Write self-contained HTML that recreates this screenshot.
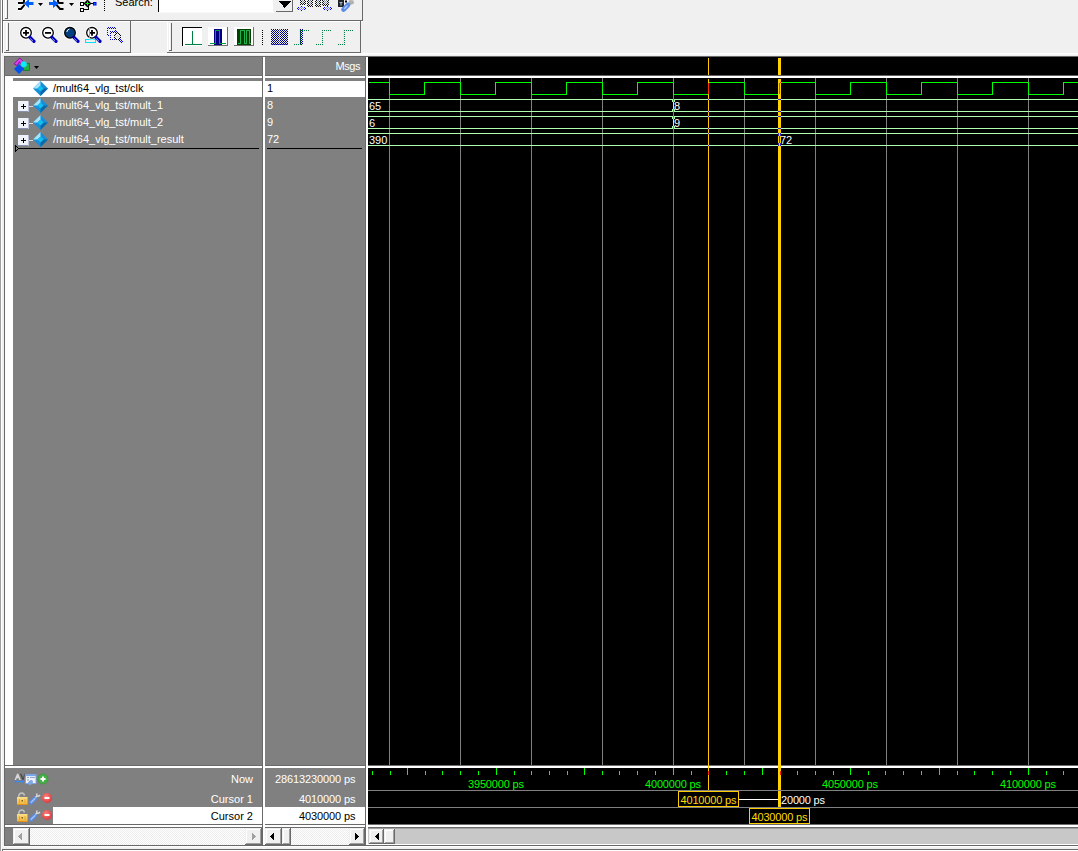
<!DOCTYPE html>
<html><head><meta charset="utf-8"><style>
html,body{margin:0;padding:0;width:1078px;height:851px;overflow:hidden;background:#f0f0f0;}
svg{display:block;font-family:"Liberation Sans",sans-serif;font-size:11px;}
</style></head><body>
<svg width="1078" height="851" viewBox="0 0 1078 851" shape-rendering="crispEdges">
<rect x="0" y="0" width="1" height="851" fill="#a0a0a0" />
<rect x="1" y="0" width="1" height="851" fill="#ffffff" />
<rect x="2" y="0" width="1" height="53" fill="#696969" />
<rect x="3" y="0" width="1" height="53" fill="#ffffff" />
<rect x="2" y="20" width="361" height="1" fill="#696969" />
<rect x="3" y="21" width="360" height="1" fill="#ffffff" />
<rect x="362" y="0" width="1" height="21" fill="#696969" />
<rect x="5" y="0" width="1" height="19" fill="#ffffff" />
<rect x="7" y="0" width="1" height="19" fill="#696969" />
<rect x="5" y="18" width="3" height="1" fill="#696969" />
<rect x="130" y="21" width="1" height="32" fill="#696969" />
<rect x="4" y="52" width="127" height="1" fill="#696969" />
<rect x="6" y="23" width="1" height="28" fill="#ffffff" />
<rect x="8" y="23" width="1" height="28" fill="#696969" />
<rect x="6" y="50" width="3" height="1" fill="#696969" />
<rect x="167" y="22" width="1" height="30" fill="#ffffff" />
<rect x="167" y="52" width="194" height="1" fill="#696969" />
<rect x="360" y="21" width="1" height="32" fill="#696969" />
<rect x="169" y="23" width="1" height="28" fill="#ffffff" />
<rect x="171" y="23" width="1" height="28" fill="#696969" />
<rect x="169" y="50" width="3" height="1" fill="#696969" />
<rect x="104" y="0" width="1" height="1" fill="#000" />
<rect x="104" y="2" width="1" height="1" fill="#000" />
<rect x="104" y="4" width="1" height="1" fill="#000" />
<rect x="104" y="6" width="1" height="1" fill="#000" />
<rect x="104" y="8" width="1" height="1" fill="#000" />
<rect x="104" y="10" width="1" height="1" fill="#000" />
<text x="115" y="6" fill="#000" text-anchor="start" >Search:</text>
<rect x="158" y="0" width="115" height="12" fill="#ffffff" />
<rect x="158" y="0" width="1" height="12" fill="#000" />
<rect x="158" y="12" width="116" height="1" fill="#f8f8f8" />
<rect x="276" y="0" width="17" height="12" fill="#f0f0f0" />
<rect x="292" y="0" width="1" height="12" fill="#696969" />
<rect x="276" y="11" width="17" height="1" fill="#696969" />
<path d="M278.5 1 L291 1 L284.75 8 Z" fill="#000"/>
<rect x="262" y="30" width="1" height="1" fill="#000" />
<rect x="262" y="32" width="1" height="1" fill="#000" />
<rect x="262" y="34" width="1" height="1" fill="#000" />
<rect x="262" y="36" width="1" height="1" fill="#000" />
<rect x="262" y="38" width="1" height="1" fill="#000" />
<rect x="262" y="40" width="1" height="1" fill="#000" />
<rect x="262" y="42" width="1" height="1" fill="#000" />
<rect x="262" y="44" width="1" height="1" fill="#000" />
<rect x="3" y="53" width="1075" height="1" fill="#ffffff" />
<rect x="3" y="54" width="1075" height="1" fill="#f8f8f8" />
<rect x="4" y="56" width="1074" height="1" fill="#696969" />
<rect x="4" y="56" width="1" height="790" fill="#696969" />
<rect x="2" y="849" width="1076" height="1" fill="#696969" />
<rect x="2" y="849" width="1" height="2" fill="#696969" />
<rect x="3" y="850" width="1075" height="1" fill="#ffffff" />
<rect x="5" y="57" width="257" height="18" fill="#808080" />
<rect x="5" y="75" width="257" height="1" fill="#6a6a6a" />
<rect x="5" y="76" width="257" height="690" fill="#808080" />
<rect x="5" y="76" width="8" height="690" fill="#ffffff" />
<rect x="13" y="76" width="249" height="1" fill="#ffffff" />
<rect x="13" y="77" width="249" height="1" fill="#ffffff" />
<rect x="13" y="81" width="249" height="16" fill="#ffffff" />
<rect x="262" y="56" width="1" height="790" fill="#696969" />
<rect x="263" y="57" width="1" height="792" fill="#ffffff" />
<rect x="264" y="57" width="1" height="792" fill="#ffffff" />
<rect x="265" y="57" width="100" height="18" fill="#808080" />
<rect x="265" y="75" width="100" height="1" fill="#6a6a6a" />
<rect x="265" y="76" width="100" height="690" fill="#808080" />
<rect x="265" y="76" width="100" height="1" fill="#ffffff" />
<rect x="265" y="77" width="100" height="1" fill="#ffffff" />
<rect x="265" y="81" width="100" height="16" fill="#ffffff" />
<rect x="365" y="56" width="1" height="790" fill="#696969" />
<rect x="366" y="57" width="1" height="792" fill="#ffffff" />
<rect x="367" y="57" width="1" height="792" fill="#ffffff" />
<rect x="368" y="57" width="710" height="18" fill="#000" />
<rect x="368" y="75" width="710" height="1" fill="#606060" />
<rect x="368" y="76" width="710" height="1" fill="#ffffff" />
<rect x="368" y="77" width="710" height="1" fill="#ffffff" />
<rect x="368" y="78" width="710" height="687" fill="#000" />
<rect x="5" y="765" width="257" height="1" fill="#6a6a6a" />
<rect x="5" y="766" width="257" height="1" fill="#ffffff" />
<rect x="5" y="767" width="257" height="1" fill="#ffffff" />
<rect x="265" y="765" width="100" height="1" fill="#6a6a6a" />
<rect x="265" y="766" width="100" height="1" fill="#ffffff" />
<rect x="265" y="767" width="100" height="1" fill="#ffffff" />
<rect x="368" y="765" width="710" height="1" fill="#6a6a6a" />
<rect x="368" y="766" width="710" height="1" fill="#ffffff" />
<rect x="368" y="767" width="710" height="1" fill="#ffffff" />
<rect x="5" y="768" width="257" height="56" fill="#808080" />
<rect x="265" y="768" width="100" height="56" fill="#808080" />
<rect x="368" y="768" width="710" height="56" fill="#000" />
<rect x="53" y="807" width="209" height="17" fill="#ffffff" />
<rect x="265" y="807" width="100" height="17" fill="#ffffff" />
<rect x="5" y="824" width="257" height="1" fill="#6a6a6a" />
<rect x="5" y="825" width="257" height="1" fill="#ffffff" />
<rect x="5" y="826" width="257" height="1" fill="#ffffff" />
<rect x="5" y="827" width="257" height="1" fill="#6a6a6a" />
<rect x="265" y="824" width="100" height="1" fill="#6a6a6a" />
<rect x="265" y="825" width="100" height="1" fill="#ffffff" />
<rect x="265" y="826" width="100" height="1" fill="#ffffff" />
<rect x="265" y="827" width="100" height="1" fill="#6a6a6a" />
<rect x="368" y="824" width="710" height="1" fill="#6a6a6a" />
<rect x="368" y="825" width="710" height="1" fill="#ffffff" />
<rect x="368" y="826" width="710" height="1" fill="#ffffff" />
<rect x="368" y="827" width="710" height="1" fill="#6a6a6a" />
<rect x="5" y="828" width="257" height="17" fill="#808080" />
<rect x="265" y="828" width="100" height="17" fill="#808080" />
<rect x="368" y="829" width="710" height="15" fill="#c8c8c8" />
<rect x="368" y="828" width="710" height="1" fill="#a0a0a0" />
<rect x="368" y="844" width="710" height="1" fill="#ffffff" />
<rect x="5" y="845" width="1073" height="1" fill="#696969" />
<rect x="3" y="846" width="1075" height="1" fill="#ffffff" />
<rect x="3" y="847" width="1075" height="1" fill="#f4f4f4" />
<text x="53" y="92" fill="#000" text-anchor="start" >/mult64_vlg_tst/clk</text>
<text x="267" y="92" fill="#000" text-anchor="start" >1</text>
<text x="53" y="109" fill="#ffffff" text-anchor="start" >/mult64_vlg_tst/mult_1</text>
<text x="267" y="109" fill="#ffffff" text-anchor="start" >8</text>
<text x="53" y="126" fill="#ffffff" text-anchor="start" >/mult64_vlg_tst/mult_2</text>
<text x="267" y="126" fill="#ffffff" text-anchor="start" >9</text>
<text x="53" y="143" fill="#ffffff" text-anchor="start" >/mult64_vlg_tst/mult_result</text>
<text x="267" y="143" fill="#ffffff" text-anchor="start" >72</text>
<text x="360.5" y="70" fill="#ffffff" text-anchor="end" textLength="25" lengthAdjust="spacing">Msgs</text>
<rect x="18" y="148" width="241" height="1" fill="#000" />
<rect x="267" y="148" width="95" height="1" fill="#000" />
<rect x="389" y="78" width="1" height="687" fill="#808080" />
<rect x="460" y="78" width="1" height="687" fill="#808080" />
<rect x="531" y="78" width="1" height="687" fill="#808080" />
<rect x="602" y="78" width="1" height="687" fill="#808080" />
<rect x="673" y="78" width="1" height="687" fill="#808080" />
<rect x="744" y="78" width="1" height="687" fill="#808080" />
<rect x="815" y="78" width="1" height="687" fill="#808080" />
<rect x="886" y="78" width="1" height="687" fill="#808080" />
<rect x="957" y="78" width="1" height="687" fill="#808080" />
<rect x="1028" y="78" width="1" height="687" fill="#808080" />
<path d="M369 82.5 H389.5 V94.5 H424.5 V82.5 H460.5 V94.5 H495.5 V82.5 H531.5 V94.5 H566.5 V82.5 H602.5 V94.5 H637.5 V82.5 H673.5 V94.5 H708.5 V82.5 H744.5 V94.5 H779.5 V82.5 H815.5 V94.5 H850.5 V82.5 H886.5 V94.5 H921.5 V82.5 H957.5 V94.5 H992.5 V82.5 H1028.5 V94.5 H1063.5 V82.5 H1078" fill="none" stroke="#00ff00" stroke-width="1"/>
<rect x="368" y="99" width="304" height="1" fill="#b0ffb0" />
<rect x="368" y="111" width="304" height="1" fill="#b0ffb0" />
<rect x="675" y="99" width="403" height="1" fill="#b0ffb0" />
<rect x="675" y="111" width="403" height="1" fill="#b0ffb0" />
<rect x="672" y="99" width="1" height="3" fill="#b0ffb0" />
<rect x="673" y="102" width="1" height="7" fill="#b0ffb0" />
<rect x="672" y="109" width="1" height="3" fill="#b0ffb0" />
<rect x="674" y="99" width="1" height="3" fill="#b0ffb0" />
<rect x="674" y="109" width="1" height="3" fill="#b0ffb0" />
<text x="369" y="110" fill="#ffffff" text-anchor="start" >65</text>
<text x="674" y="110" fill="#ffffff" text-anchor="start" >8</text>
<rect x="368" y="116" width="304" height="1" fill="#b0ffb0" />
<rect x="368" y="128" width="304" height="1" fill="#b0ffb0" />
<rect x="675" y="116" width="403" height="1" fill="#b0ffb0" />
<rect x="675" y="128" width="403" height="1" fill="#b0ffb0" />
<rect x="672" y="116" width="1" height="3" fill="#b0ffb0" />
<rect x="673" y="119" width="1" height="7" fill="#b0ffb0" />
<rect x="672" y="126" width="1" height="3" fill="#b0ffb0" />
<rect x="674" y="116" width="1" height="3" fill="#b0ffb0" />
<rect x="674" y="126" width="1" height="3" fill="#b0ffb0" />
<text x="369" y="127" fill="#ffffff" text-anchor="start" >6</text>
<text x="674" y="127" fill="#ffffff" text-anchor="start" >9</text>
<rect x="368" y="133" width="410" height="1" fill="#b0ffb0" />
<rect x="368" y="145" width="410" height="1" fill="#b0ffb0" />
<rect x="781" y="133" width="297" height="1" fill="#b0ffb0" />
<rect x="781" y="145" width="297" height="1" fill="#b0ffb0" />
<rect x="778" y="133" width="1" height="3" fill="#b0ffb0" />
<rect x="779" y="136" width="1" height="7" fill="#b0ffb0" />
<rect x="778" y="143" width="1" height="3" fill="#b0ffb0" />
<rect x="780" y="133" width="1" height="3" fill="#b0ffb0" />
<rect x="780" y="143" width="1" height="3" fill="#b0ffb0" />
<text x="369" y="144" fill="#ffffff" text-anchor="start" >390</text>
<text x="780" y="144" fill="#ffffff" text-anchor="start" >72</text>
<rect x="708" y="58" width="1" height="17" fill="#ffcc00" />
<rect x="708" y="79" width="1" height="712" fill="#ffcc00" />
<rect x="778" y="58" width="3" height="17" fill="#ffd200" />
<rect x="778" y="79" width="3" height="729" fill="#ffd200" />
<rect x="708" y="83" width="1" height="11" fill="#ff3000" />
<rect x="779" y="83" width="1" height="11" fill="#ff3000" />
<rect x="780" y="82" width="1" height="1" fill="#ff3000" />
<rect x="708" y="99" width="1" height="1" fill="#3828b0" />
<rect x="778" y="99" width="3" height="1" fill="#3828b0" />
<rect x="708" y="111" width="1" height="1" fill="#3828b0" />
<rect x="778" y="111" width="3" height="1" fill="#3828b0" />
<rect x="708" y="116" width="1" height="1" fill="#3828b0" />
<rect x="778" y="116" width="3" height="1" fill="#3828b0" />
<rect x="708" y="128" width="1" height="1" fill="#3828b0" />
<rect x="778" y="128" width="3" height="1" fill="#3828b0" />
<rect x="708" y="133" width="1" height="1" fill="#3828b0" />
<rect x="708" y="145" width="1" height="1" fill="#3828b0" />
<rect x="778" y="133" width="1" height="1" fill="#3828b0" />
<rect x="780" y="133" width="1" height="1" fill="#3828b0" />
<rect x="778" y="145" width="1" height="1" fill="#3828b0" />
<rect x="780" y="145" width="1" height="1" fill="#3828b0" />
<rect x="778" y="133" width="1" height="3" fill="#3828b0" />
<rect x="779" y="136" width="1" height="7" fill="#3828b0" />
<rect x="778" y="143" width="1" height="3" fill="#3828b0" />
<rect x="780" y="133" width="1" height="3" fill="#3828b0" />
<rect x="780" y="143" width="1" height="3" fill="#3828b0" />
<rect x="372" y="771" width="1" height="4" fill="#00ff00" />
<rect x="390" y="771" width="1" height="4" fill="#00ff00" />
<rect x="407" y="768" width="1" height="7" fill="#00ff00" />
<rect x="425" y="771" width="1" height="4" fill="#00ff00" />
<rect x="442" y="771" width="1" height="4" fill="#00ff00" />
<rect x="460" y="771" width="1" height="4" fill="#00ff00" />
<rect x="478" y="771" width="1" height="4" fill="#00ff00" />
<rect x="496" y="768" width="1" height="7" fill="#00ff00" />
<rect x="514" y="771" width="1" height="4" fill="#00ff00" />
<rect x="531" y="771" width="1" height="4" fill="#00ff00" />
<rect x="549" y="771" width="1" height="4" fill="#00ff00" />
<rect x="567" y="771" width="1" height="4" fill="#00ff00" />
<rect x="584" y="768" width="1" height="7" fill="#00ff00" />
<rect x="602" y="771" width="1" height="4" fill="#00ff00" />
<rect x="619" y="771" width="1" height="4" fill="#00ff00" />
<rect x="637" y="771" width="1" height="4" fill="#00ff00" />
<rect x="655" y="771" width="1" height="4" fill="#00ff00" />
<rect x="673" y="768" width="1" height="7" fill="#00ff00" />
<rect x="691" y="771" width="1" height="4" fill="#00ff00" />
<rect x="708" y="771" width="1" height="4" fill="#ff2000" />
<rect x="726" y="771" width="1" height="4" fill="#00ff00" />
<rect x="744" y="771" width="1" height="4" fill="#00ff00" />
<rect x="762" y="768" width="1" height="7" fill="#00ff00" />
<rect x="780" y="771" width="1" height="4" fill="#ff2000" />
<rect x="797" y="771" width="1" height="4" fill="#00ff00" />
<rect x="815" y="771" width="1" height="4" fill="#00ff00" />
<rect x="833" y="771" width="1" height="4" fill="#00ff00" />
<rect x="850" y="768" width="1" height="7" fill="#00ff00" />
<rect x="868" y="771" width="1" height="4" fill="#00ff00" />
<rect x="885" y="771" width="1" height="4" fill="#00ff00" />
<rect x="903" y="771" width="1" height="4" fill="#00ff00" />
<rect x="921" y="771" width="1" height="4" fill="#00ff00" />
<rect x="939" y="768" width="1" height="7" fill="#00ff00" />
<rect x="957" y="771" width="1" height="4" fill="#00ff00" />
<rect x="974" y="771" width="1" height="4" fill="#00ff00" />
<rect x="992" y="771" width="1" height="4" fill="#00ff00" />
<rect x="1010" y="771" width="1" height="4" fill="#00ff00" />
<rect x="1028" y="768" width="1" height="7" fill="#00ff00" />
<rect x="1046" y="771" width="1" height="4" fill="#00ff00" />
<rect x="1063" y="771" width="1" height="4" fill="#00ff00" />
<text x="496" y="788" fill="#00ff00" text-anchor="middle" textLength="56" lengthAdjust="spacing">3950000 ps</text>
<text x="673" y="788" fill="#00ff00" text-anchor="middle" textLength="56" lengthAdjust="spacing">4000000 ps</text>
<text x="850" y="788" fill="#00ff00" text-anchor="middle" textLength="56" lengthAdjust="spacing">4050000 ps</text>
<text x="1028" y="788" fill="#00ff00" text-anchor="middle" textLength="56" lengthAdjust="spacing">4100000 ps</text>
<rect x="368" y="790" width="710" height="1" fill="#808080" />
<rect x="368" y="807" width="710" height="1" fill="#808080" />
<rect x="678.5" y="791.5" width="60" height="15" fill="#000" stroke="#ffcc00"/>
<text x="708.5" y="804" fill="#ffdc00" text-anchor="middle" textLength="56" lengthAdjust="spacing">4010000 ps</text>
<rect x="739" y="799" width="39" height="1" fill="#ffffff" />
<text x="781" y="804" fill="#ffffff" text-anchor="start" textLength="44" lengthAdjust="spacing">20000 ps</text>
<rect x="749.5" y="808.5" width="60" height="15" fill="#000" stroke="#ffcc00"/>
<text x="779.5" y="821" fill="#ffdc00" text-anchor="middle" textLength="56" lengthAdjust="spacing">4030000 ps</text>
<text x="253" y="783" fill="#ffffff" text-anchor="end" >Now</text>
<text x="355.5" y="783" fill="#ffffff" text-anchor="end" textLength="80.5" lengthAdjust="spacing">28613230000 ps</text>
<text x="253" y="803" fill="#ffffff" text-anchor="end" >Cursor 1</text>
<text x="355.5" y="803" fill="#ffffff" text-anchor="end" textLength="56.5" lengthAdjust="spacing">4010000 ps</text>
<text x="253" y="820" fill="#000" text-anchor="end" >Cursor 2</text>
<text x="355.5" y="820" fill="#000" text-anchor="end" textLength="56.5" lengthAdjust="spacing">4030000 ps</text>
<g shape-rendering="auto">
<path d="M18 3 H22.5 Q24.5 3 24.5 1 V0 M18 9 H21 L24.5 5" stroke="#fff" stroke-width="4" fill="none" opacity="0.9"/>
<path d="M18 3 H22.5 Q24 3 24 1 V0 M18 9 H21 L24 5.5 V4.5" stroke="#000" stroke-width="2" fill="none"/>
<path d="M24 3.5 L29 -1 V2 H33.5 V5 H29 V8 Z" fill="#0060ff"/>
<path d="M38 3 H43 L40.5 6 Z" fill="#000"/>
<path d="M63.5 3 H59.5 Q58 3 58 1 V0 M63.5 9 H60 L57 5.5 V4.5" stroke="#000" stroke-width="2" fill="none"/>
<path d="M58.5 3.5 L53 -1 V2 H49 V5 H53 V8 Z" fill="#0060ff"/>
<path d="M69 3 H74 L71.5 6 Z" fill="#000"/>
</g>
<rect x="80" y="2" width="4" height="4" fill="#000" />
<rect x="81" y="3" width="2" height="2" fill="#fff" />
<rect x="80" y="8" width="4" height="4" fill="#000" />
<rect x="81" y="9" width="2" height="2" fill="#fff" />
<rect x="84" y="3" width="1" height="1" fill="#000" />
<rect x="84" y="9" width="5" height="1" fill="#000" />
<rect x="88" y="6" width="1" height="4" fill="#000" />
<rect x="91" y="3" width="2" height="1" fill="#000" />
<g shape-rendering="auto">
<path d="M87.5 -0.5 L91.5 3.5 L87.5 7.5 L83.5 3.5 Z" fill="#000"/>
<path d="M87.5 1.5 V5.5 M85.5 3.5 H89.5" stroke="#00ff00" stroke-width="1"/>
<rect x="93" y="2" width="3.5" height="3.5" fill="#0000ff"/>
<rect x="94.2" y="3.2" width="1.2" height="1.2" fill="#00c0ff"/>
</g>
<rect x="300" y="0" width="1" height="1" fill="#101010" />
<rect x="302" y="0" width="1" height="1" fill="#8090a0" />
<rect x="304" y="0" width="1" height="1" fill="#101010" />
<rect x="301" y="1" width="1" height="1" fill="#101010" />
<rect x="303" y="1" width="1" height="1" fill="#8090a0" />
<rect x="305" y="1" width="1" height="1" fill="#101010" />
<rect x="300" y="2" width="1" height="1" fill="#101010" />
<rect x="302" y="2" width="1" height="1" fill="#8090a0" />
<rect x="304" y="2" width="1" height="1" fill="#101010" />
<rect x="301" y="3" width="1" height="1" fill="#101010" />
<rect x="303" y="3" width="1" height="1" fill="#101010" />
<rect x="305" y="3" width="1" height="1" fill="#101010" />
<rect x="300" y="4" width="1" height="1" fill="#101010" />
<rect x="302" y="4" width="1" height="1" fill="#101010" />
<rect x="304" y="4" width="1" height="1" fill="#101010" />
<rect x="308" y="0" width="1" height="1" fill="#101010" />
<rect x="310" y="0" width="1" height="1" fill="#8090a0" />
<rect x="312" y="0" width="1" height="1" fill="#101010" />
<rect x="307" y="1" width="1" height="1" fill="#101010" />
<rect x="309" y="1" width="1" height="1" fill="#8090a0" />
<rect x="311" y="1" width="1" height="1" fill="#101010" />
<rect x="308" y="2" width="1" height="1" fill="#101010" />
<rect x="310" y="2" width="1" height="1" fill="#8090a0" />
<rect x="312" y="2" width="1" height="1" fill="#101010" />
<rect x="307" y="3" width="1" height="1" fill="#101010" />
<rect x="309" y="3" width="1" height="1" fill="#8090a0" />
<rect x="311" y="3" width="1" height="1" fill="#101010" />
<rect x="308" y="4" width="1" height="1" fill="#101010" />
<rect x="310" y="4" width="1" height="1" fill="#8090a0" />
<rect x="312" y="4" width="1" height="1" fill="#101010" />
<rect x="307" y="5" width="1" height="1" fill="#101010" />
<rect x="309" y="5" width="1" height="1" fill="#101010" />
<rect x="311" y="5" width="1" height="1" fill="#101010" />
<rect x="308" y="6" width="1" height="1" fill="#101010" />
<rect x="310" y="6" width="1" height="1" fill="#101010" />
<rect x="312" y="6" width="1" height="1" fill="#101010" />
<rect x="316" y="0" width="1" height="1" fill="#101010" />
<rect x="318" y="0" width="1" height="1" fill="#8090a0" />
<rect x="320" y="0" width="1" height="1" fill="#101010" />
<rect x="315" y="1" width="1" height="1" fill="#101010" />
<rect x="317" y="1" width="1" height="1" fill="#8090a0" />
<rect x="319" y="1" width="1" height="1" fill="#101010" />
<rect x="316" y="2" width="1" height="1" fill="#101010" />
<rect x="318" y="2" width="1" height="1" fill="#8090a0" />
<rect x="320" y="2" width="1" height="1" fill="#101010" />
<rect x="315" y="3" width="1" height="1" fill="#101010" />
<rect x="317" y="3" width="1" height="1" fill="#8090a0" />
<rect x="319" y="3" width="1" height="1" fill="#101010" />
<rect x="316" y="4" width="1" height="1" fill="#101010" />
<rect x="318" y="4" width="1" height="1" fill="#8090a0" />
<rect x="320" y="4" width="1" height="1" fill="#101010" />
<rect x="315" y="5" width="1" height="1" fill="#101010" />
<rect x="317" y="5" width="1" height="1" fill="#101010" />
<rect x="319" y="5" width="1" height="1" fill="#101010" />
<rect x="316" y="6" width="1" height="1" fill="#101010" />
<rect x="318" y="6" width="1" height="1" fill="#101010" />
<rect x="320" y="6" width="1" height="1" fill="#101010" />
<rect x="322" y="0" width="1" height="1" fill="#101010" />
<rect x="324" y="0" width="1" height="1" fill="#8090a0" />
<rect x="326" y="0" width="1" height="1" fill="#8090a0" />
<rect x="328" y="0" width="1" height="1" fill="#101010" />
<rect x="323" y="1" width="1" height="1" fill="#101010" />
<rect x="325" y="1" width="1" height="1" fill="#8090a0" />
<rect x="327" y="1" width="1" height="1" fill="#101010" />
<rect x="322" y="2" width="1" height="1" fill="#101010" />
<rect x="324" y="2" width="1" height="1" fill="#8090a0" />
<rect x="326" y="2" width="1" height="1" fill="#8090a0" />
<rect x="328" y="2" width="1" height="1" fill="#101010" />
<rect x="323" y="3" width="1" height="1" fill="#101010" />
<rect x="325" y="3" width="1" height="1" fill="#8090a0" />
<rect x="327" y="3" width="1" height="1" fill="#101010" />
<rect x="322" y="4" width="1" height="1" fill="#101010" />
<rect x="324" y="4" width="1" height="1" fill="#101010" />
<rect x="326" y="4" width="1" height="1" fill="#101010" />
<rect x="328" y="4" width="1" height="1" fill="#101010" />
<rect x="323" y="5" width="1" height="1" fill="#101010" />
<rect x="325" y="5" width="1" height="1" fill="#101010" />
<rect x="327" y="5" width="1" height="1" fill="#101010" />
<rect x="301" y="6" width="1" height="1" fill="#0000ff" />
<rect x="298" y="7" width="1" height="1" fill="#0000ff" />
<rect x="300" y="7" width="1" height="1" fill="#8080ff" />
<rect x="302" y="7" width="1" height="1" fill="#8080ff" />
<rect x="304" y="7" width="1" height="1" fill="#0000ff" />
<rect x="297" y="8" width="1" height="1" fill="#0000ff" />
<rect x="299" y="8" width="1" height="1" fill="#8080ff" />
<rect x="301" y="8" width="1" height="1" fill="#8080ff" />
<rect x="303" y="8" width="1" height="1" fill="#8080ff" />
<rect x="305" y="8" width="1" height="1" fill="#0000ff" />
<rect x="298" y="9" width="1" height="1" fill="#0000ff" />
<rect x="300" y="9" width="1" height="1" fill="#8080ff" />
<rect x="302" y="9" width="1" height="1" fill="#8080ff" />
<rect x="304" y="9" width="1" height="1" fill="#0000ff" />
<rect x="301" y="10" width="1" height="1" fill="#0000ff" />
<rect x="327" y="6" width="1" height="1" fill="#0000ff" />
<rect x="324" y="7" width="1" height="1" fill="#0000ff" />
<rect x="326" y="7" width="1" height="1" fill="#8080ff" />
<rect x="328" y="7" width="1" height="1" fill="#8080ff" />
<rect x="330" y="7" width="1" height="1" fill="#0000ff" />
<rect x="323" y="8" width="1" height="1" fill="#0000ff" />
<rect x="325" y="8" width="1" height="1" fill="#8080ff" />
<rect x="327" y="8" width="1" height="1" fill="#8080ff" />
<rect x="329" y="8" width="1" height="1" fill="#8080ff" />
<rect x="331" y="8" width="1" height="1" fill="#0000ff" />
<rect x="324" y="9" width="1" height="1" fill="#0000ff" />
<rect x="326" y="9" width="1" height="1" fill="#8080ff" />
<rect x="328" y="9" width="1" height="1" fill="#8080ff" />
<rect x="330" y="9" width="1" height="1" fill="#0000ff" />
<rect x="327" y="10" width="1" height="1" fill="#0000ff" />
<g shape-rendering="auto">
<rect x="338" y="0" width="6" height="7" fill="#202428"/>
<path d="M339.5 2.5 H342.5 M341 2.5 V5.5" stroke="#a8b8c8" stroke-width="1.2"/>
<rect x="345" y="0.5" width="2" height="2" fill="#000"/>
<path d="M348 3.5 L349.5 0 L353.5 0.5 L354 3.5 L350.5 5 Z" fill="#b0b0b0"/>
<path d="M343.5 9.5 L348 5" stroke="#5a8ae8" stroke-width="4.6" stroke-linecap="round"/>
<path d="M344.5 8.5 L347 6" stroke="#a8c4f4" stroke-width="1.6" stroke-linecap="round"/>
</g>
<g shape-rendering="auto">
<circle cx="26" cy="32.8" r="6.2" fill="none" stroke="#ffffff" stroke-width="1.5" opacity="0.8"/>
<circle cx="26" cy="32.8" r="5.3" fill="#ffffff" stroke="#000" stroke-width="1.3"/>
<path d="M30 37.3 L34 41.3" stroke="#0000c0" stroke-width="3.2" stroke-linecap="round"/>
<path d="M30.2 38.4 L33 41.199999999999996" stroke="#ffffff" stroke-width="0.6"/>
<path d="M26 30 V35.8 M23 32.9 H29" stroke="#000" stroke-width="1.8"/>
<circle cx="48" cy="32.8" r="6.2" fill="none" stroke="#ffffff" stroke-width="1.5" opacity="0.8"/>
<circle cx="48" cy="32.8" r="5.3" fill="#ffffff" stroke="#000" stroke-width="1.3"/>
<path d="M52 37.3 L56 41.3" stroke="#0000c0" stroke-width="3.2" stroke-linecap="round"/>
<path d="M52.2 38.4 L55 41.199999999999996" stroke="#ffffff" stroke-width="0.6"/>
<path d="M45 32.9 H51" stroke="#000" stroke-width="1.8"/>
<circle cx="70" cy="32.8" r="6.2" fill="none" stroke="#ffffff" stroke-width="1.5" opacity="0.8"/>
<circle cx="70" cy="32.8" r="5.3" fill="#003f7f" stroke="#000" stroke-width="1.3"/>
<path d="M74 37.3 L78 41.3" stroke="#0000c0" stroke-width="3.2" stroke-linecap="round"/>
<path d="M74.2 38.4 L77 41.199999999999996" stroke="#ffffff" stroke-width="0.6"/>
<path d="M66.8 32 Q67 29.5 69.5 29" stroke="#fff" stroke-width="1" fill="none"/>
<rect x="85.5" y="39.5" width="10" height="3" fill="none" stroke="#00e0ff" stroke-width="1"/>
<circle cx="92" cy="32.8" r="6.2" fill="none" stroke="#ffffff" stroke-width="1.5" opacity="0.8"/>
<circle cx="92" cy="32.8" r="5.3" fill="#ffffff" stroke="#000" stroke-width="1.3"/>
<path d="M96 37.3 L100 41.3" stroke="#0000c0" stroke-width="3.2" stroke-linecap="round"/>
<path d="M96.2 38.4 L99 41.199999999999996" stroke="#ffffff" stroke-width="0.6"/>
<path d="M92 30 V35.8 M89 32.9 H95" stroke="#000" stroke-width="1.8"/><path d="M89.5 27.5 V38" stroke="#00e0ff" stroke-width="1"/>
</g>
<rect x="108" y="27" width="1" height="1" fill="#0000c0" />
<rect x="110" y="27" width="1" height="1" fill="#0000c0" />
<rect x="112" y="27" width="1" height="1" fill="#0000c0" />
<rect x="114" y="27" width="1" height="1" fill="#0000c0" />
<rect x="107" y="28" width="1" height="1" fill="#0000c0" />
<rect x="109" y="28" width="1" height="1" fill="#0000c0" />
<rect x="111" y="28" width="1" height="1" fill="#0000c0" />
<rect x="113" y="28" width="1" height="1" fill="#0000c0" />
<rect x="115" y="28" width="1" height="1" fill="#0000c0" />
<rect x="107" y="30" width="1" height="1" fill="#0000c0" />
<rect x="115" y="30" width="1" height="1" fill="#0000c0" />
<rect x="107" y="32" width="1" height="1" fill="#0000c0" />
<rect x="110" y="31" width="1" height="1" fill="#0000c0" />
<rect x="112" y="31" width="1" height="1" fill="#0000c0" />
<rect x="114" y="31" width="1" height="1" fill="#0000c0" />
<rect x="111" y="32" width="1" height="1" fill="#0000c0" />
<rect x="113" y="32" width="1" height="1" fill="#0000c0" />
<rect x="115" y="32" width="1" height="1" fill="#0000c0" />
<rect x="116" y="31" width="1" height="1" fill="#0000c0" />
<rect x="117" y="32" width="1" height="1" fill="#0000c0" />
<rect x="110" y="33" width="1" height="1" fill="#0000c0" />
<rect x="107" y="34" width="1" height="1" fill="#0000c0" />
<rect x="108" y="35" width="1" height="1" fill="#0000c0" />
<rect x="110" y="35" width="1" height="1" fill="#0000c0" />
<rect x="110" y="37" width="1" height="1" fill="#0000c0" />
<rect x="110" y="39" width="1" height="1" fill="#0000c0" />
<rect x="112" y="39" width="1" height="1" fill="#0000c0" />
<rect x="114" y="39" width="1" height="1" fill="#0000c0" />
<rect x="120" y="39" width="1" height="1" fill="#0000ff" />
<rect x="119" y="40" width="1" height="1" fill="#0000ff" />
<rect x="121" y="40" width="1" height="1" fill="#0000ff" />
<rect x="120" y="41" width="1" height="1" fill="#0000ff" />
<rect x="122" y="41" width="1" height="1" fill="#0000ff" />
<rect x="121" y="42" width="1" height="1" fill="#0000ff" />
<rect x="116" y="33" width="1" height="1" fill="#000000" />
<rect x="118" y="33" width="1" height="1" fill="#000000" />
<rect x="115" y="34" width="1" height="1" fill="#000000" />
<rect x="119" y="34" width="1" height="1" fill="#000000" />
<rect x="114" y="35" width="1" height="1" fill="#000000" />
<rect x="120" y="35" width="1" height="1" fill="#000000" />
<rect x="114" y="37" width="1" height="1" fill="#000000" />
<rect x="120" y="37" width="1" height="1" fill="#000000" />
<rect x="115" y="38" width="1" height="1" fill="#000000" />
<rect x="119" y="38" width="1" height="1" fill="#000000" />
<rect x="116" y="39" width="1" height="1" fill="#000000" />
<rect x="118" y="39" width="1" height="1" fill="#000000" />
<rect x="117" y="35" width="1" height="1" fill="#c8c8c8" />
<rect x="116" y="36" width="1" height="1" fill="#c8c8c8" />
<rect x="118" y="36" width="1" height="1" fill="#c8c8c8" />
<rect x="117" y="37" width="1" height="1" fill="#c8c8c8" />
<rect x="115" y="36" width="1" height="1" fill="#c8c8c8" />
<rect x="119" y="36" width="1" height="1" fill="#c8c8c8" />
<rect x="116" y="35" width="1" height="1" fill="#f4f4f4" />
<rect x="118" y="35" width="1" height="1" fill="#f4f4f4" />
<rect x="117" y="36" width="1" height="1" fill="#f4f4f4" />
<rect x="116" y="37" width="1" height="1" fill="#f4f4f4" />
<rect x="118" y="37" width="1" height="1" fill="#f4f4f4" />
<rect x="117" y="34" width="1" height="1" fill="#f4f4f4" />
<rect x="117" y="38" width="1" height="1" fill="#f4f4f4" />
<rect x="182" y="27" width="20" height="19" fill="#ffffff" />
<rect x="182" y="27" width="1" height="19" fill="#000" />
<rect x="182" y="27" width="20" height="1" fill="#000" />
<rect x="192" y="31" width="1" height="14" fill="#008040" />
<rect x="185" y="44" width="17" height="1" fill="#008040" />
<rect x="208" y="27" width="20" height="19" fill="#ffffff" />
<rect x="227" y="27" width="1" height="19" fill="#707070" />
<rect x="208" y="45" width="20" height="1" fill="#707070" />
<rect x="214" y="29" width="8" height="16" fill="#000080" />
<path d="M210 43.5 H215.5 V30.5 H219.5 V43.5 H226" stroke="#00a040" fill="none"/>
<rect x="234" y="27" width="20" height="19" fill="#ffffff" />
<rect x="253" y="27" width="1" height="19" fill="#707070" />
<rect x="234" y="45" width="20" height="1" fill="#707070" />
<rect x="237" y="29" width="14" height="16" fill="#004000" />
<path d="M238 43.5 H240.5 V30.5 H244.5 V43.5 H246.5 V30.5 H249.5 V43.5 H251" stroke="#20b050" fill="none"/>
<rect x="271" y="29" width="1" height="1" fill="#000080" />
<rect x="273" y="29" width="1" height="1" fill="#000080" />
<rect x="275" y="29" width="1" height="1" fill="#000080" />
<rect x="277" y="29" width="1" height="1" fill="#000080" />
<rect x="279" y="29" width="1" height="1" fill="#000080" />
<rect x="281" y="29" width="1" height="1" fill="#000080" />
<rect x="283" y="29" width="1" height="1" fill="#000080" />
<rect x="285" y="29" width="1" height="1" fill="#000080" />
<rect x="287" y="29" width="1" height="1" fill="#000080" />
<rect x="272" y="30" width="1" height="1" fill="#000080" />
<rect x="274" y="30" width="1" height="1" fill="#000080" />
<rect x="276" y="30" width="1" height="1" fill="#000080" />
<rect x="278" y="30" width="1" height="1" fill="#000080" />
<rect x="280" y="30" width="1" height="1" fill="#000080" />
<rect x="282" y="30" width="1" height="1" fill="#000080" />
<rect x="284" y="30" width="1" height="1" fill="#000080" />
<rect x="286" y="30" width="1" height="1" fill="#000080" />
<rect x="271" y="31" width="1" height="1" fill="#000080" />
<rect x="273" y="31" width="1" height="1" fill="#000080" />
<rect x="275" y="31" width="1" height="1" fill="#000080" />
<rect x="277" y="31" width="1" height="1" fill="#000080" />
<rect x="279" y="31" width="1" height="1" fill="#000080" />
<rect x="281" y="31" width="1" height="1" fill="#000080" />
<rect x="283" y="31" width="1" height="1" fill="#000080" />
<rect x="285" y="31" width="1" height="1" fill="#000080" />
<rect x="287" y="31" width="1" height="1" fill="#000080" />
<rect x="272" y="32" width="1" height="1" fill="#000080" />
<rect x="274" y="32" width="1" height="1" fill="#000080" />
<rect x="276" y="32" width="1" height="1" fill="#000080" />
<rect x="278" y="32" width="1" height="1" fill="#000080" />
<rect x="280" y="32" width="1" height="1" fill="#000080" />
<rect x="282" y="32" width="1" height="1" fill="#000080" />
<rect x="284" y="32" width="1" height="1" fill="#000080" />
<rect x="286" y="32" width="1" height="1" fill="#000080" />
<rect x="271" y="33" width="1" height="1" fill="#000080" />
<rect x="273" y="33" width="1" height="1" fill="#000080" />
<rect x="275" y="33" width="1" height="1" fill="#000080" />
<rect x="277" y="33" width="1" height="1" fill="#000080" />
<rect x="279" y="33" width="1" height="1" fill="#000080" />
<rect x="281" y="33" width="1" height="1" fill="#000080" />
<rect x="283" y="33" width="1" height="1" fill="#000080" />
<rect x="285" y="33" width="1" height="1" fill="#000080" />
<rect x="287" y="33" width="1" height="1" fill="#000080" />
<rect x="272" y="34" width="1" height="1" fill="#000080" />
<rect x="274" y="34" width="1" height="1" fill="#000080" />
<rect x="276" y="34" width="1" height="1" fill="#000080" />
<rect x="278" y="34" width="1" height="1" fill="#000080" />
<rect x="280" y="34" width="1" height="1" fill="#000080" />
<rect x="282" y="34" width="1" height="1" fill="#000080" />
<rect x="284" y="34" width="1" height="1" fill="#000080" />
<rect x="286" y="34" width="1" height="1" fill="#000080" />
<rect x="271" y="35" width="1" height="1" fill="#000080" />
<rect x="273" y="35" width="1" height="1" fill="#000080" />
<rect x="275" y="35" width="1" height="1" fill="#000080" />
<rect x="277" y="35" width="1" height="1" fill="#000080" />
<rect x="279" y="35" width="1" height="1" fill="#000080" />
<rect x="281" y="35" width="1" height="1" fill="#000080" />
<rect x="283" y="35" width="1" height="1" fill="#000080" />
<rect x="285" y="35" width="1" height="1" fill="#000080" />
<rect x="287" y="35" width="1" height="1" fill="#000080" />
<rect x="272" y="36" width="1" height="1" fill="#000080" />
<rect x="274" y="36" width="1" height="1" fill="#000080" />
<rect x="276" y="36" width="1" height="1" fill="#000080" />
<rect x="278" y="36" width="1" height="1" fill="#000080" />
<rect x="280" y="36" width="1" height="1" fill="#000080" />
<rect x="282" y="36" width="1" height="1" fill="#000080" />
<rect x="284" y="36" width="1" height="1" fill="#000080" />
<rect x="286" y="36" width="1" height="1" fill="#000080" />
<rect x="271" y="37" width="1" height="1" fill="#000080" />
<rect x="273" y="37" width="1" height="1" fill="#000080" />
<rect x="275" y="37" width="1" height="1" fill="#000080" />
<rect x="277" y="37" width="1" height="1" fill="#000080" />
<rect x="279" y="37" width="1" height="1" fill="#000080" />
<rect x="281" y="37" width="1" height="1" fill="#000080" />
<rect x="283" y="37" width="1" height="1" fill="#000080" />
<rect x="285" y="37" width="1" height="1" fill="#000080" />
<rect x="287" y="37" width="1" height="1" fill="#000080" />
<rect x="272" y="38" width="1" height="1" fill="#000080" />
<rect x="274" y="38" width="1" height="1" fill="#000080" />
<rect x="276" y="38" width="1" height="1" fill="#000080" />
<rect x="278" y="38" width="1" height="1" fill="#000080" />
<rect x="280" y="38" width="1" height="1" fill="#000080" />
<rect x="282" y="38" width="1" height="1" fill="#000080" />
<rect x="284" y="38" width="1" height="1" fill="#000080" />
<rect x="286" y="38" width="1" height="1" fill="#000080" />
<rect x="271" y="39" width="1" height="1" fill="#000080" />
<rect x="273" y="39" width="1" height="1" fill="#000080" />
<rect x="275" y="39" width="1" height="1" fill="#000080" />
<rect x="277" y="39" width="1" height="1" fill="#000080" />
<rect x="279" y="39" width="1" height="1" fill="#000080" />
<rect x="281" y="39" width="1" height="1" fill="#000080" />
<rect x="283" y="39" width="1" height="1" fill="#000080" />
<rect x="285" y="39" width="1" height="1" fill="#000080" />
<rect x="287" y="39" width="1" height="1" fill="#000080" />
<rect x="272" y="40" width="1" height="1" fill="#000080" />
<rect x="274" y="40" width="1" height="1" fill="#000080" />
<rect x="276" y="40" width="1" height="1" fill="#000080" />
<rect x="278" y="40" width="1" height="1" fill="#000080" />
<rect x="280" y="40" width="1" height="1" fill="#000080" />
<rect x="282" y="40" width="1" height="1" fill="#000080" />
<rect x="284" y="40" width="1" height="1" fill="#000080" />
<rect x="286" y="40" width="1" height="1" fill="#000080" />
<rect x="271" y="41" width="1" height="1" fill="#000080" />
<rect x="273" y="41" width="1" height="1" fill="#000080" />
<rect x="275" y="41" width="1" height="1" fill="#000080" />
<rect x="277" y="41" width="1" height="1" fill="#000080" />
<rect x="279" y="41" width="1" height="1" fill="#000080" />
<rect x="281" y="41" width="1" height="1" fill="#000080" />
<rect x="283" y="41" width="1" height="1" fill="#000080" />
<rect x="285" y="41" width="1" height="1" fill="#000080" />
<rect x="287" y="41" width="1" height="1" fill="#000080" />
<rect x="272" y="42" width="1" height="1" fill="#000080" />
<rect x="274" y="42" width="1" height="1" fill="#000080" />
<rect x="276" y="42" width="1" height="1" fill="#000080" />
<rect x="278" y="42" width="1" height="1" fill="#000080" />
<rect x="280" y="42" width="1" height="1" fill="#000080" />
<rect x="282" y="42" width="1" height="1" fill="#000080" />
<rect x="284" y="42" width="1" height="1" fill="#000080" />
<rect x="286" y="42" width="1" height="1" fill="#000080" />
<rect x="271" y="43" width="1" height="1" fill="#000080" />
<rect x="273" y="43" width="1" height="1" fill="#000080" />
<rect x="275" y="43" width="1" height="1" fill="#000080" />
<rect x="277" y="43" width="1" height="1" fill="#000080" />
<rect x="279" y="43" width="1" height="1" fill="#000080" />
<rect x="281" y="43" width="1" height="1" fill="#000080" />
<rect x="283" y="43" width="1" height="1" fill="#000080" />
<rect x="285" y="43" width="1" height="1" fill="#000080" />
<rect x="287" y="43" width="1" height="1" fill="#000080" />
<rect x="272" y="44" width="1" height="1" fill="#000080" />
<rect x="274" y="44" width="1" height="1" fill="#000080" />
<rect x="276" y="44" width="1" height="1" fill="#000080" />
<rect x="278" y="44" width="1" height="1" fill="#000080" />
<rect x="280" y="44" width="1" height="1" fill="#000080" />
<rect x="282" y="44" width="1" height="1" fill="#000080" />
<rect x="284" y="44" width="1" height="1" fill="#000080" />
<rect x="286" y="44" width="1" height="1" fill="#000080" />
<rect x="279" y="29" width="1" height="1" fill="#00a040" />
<rect x="279" y="31" width="1" height="1" fill="#00a040" />
<rect x="279" y="33" width="1" height="1" fill="#00a040" />
<rect x="279" y="35" width="1" height="1" fill="#00a040" />
<rect x="279" y="37" width="1" height="1" fill="#00a040" />
<rect x="279" y="39" width="1" height="1" fill="#00a040" />
<rect x="279" y="41" width="1" height="1" fill="#00a040" />
<rect x="279" y="43" width="1" height="1" fill="#00a040" />
<rect x="271" y="44" width="1" height="1" fill="#00a040" />
<rect x="273" y="44" width="1" height="1" fill="#00a040" />
<rect x="275" y="44" width="1" height="1" fill="#00a040" />
<rect x="277" y="44" width="1" height="1" fill="#00a040" />
<rect x="279" y="44" width="1" height="1" fill="#00a040" />
<rect x="281" y="44" width="1" height="1" fill="#00a040" />
<rect x="283" y="44" width="1" height="1" fill="#00a040" />
<rect x="285" y="44" width="1" height="1" fill="#00a040" />
<rect x="287" y="44" width="1" height="1" fill="#00a040" />
<rect x="294" y="44" width="1" height="1" fill="#008040" />
<rect x="296" y="44" width="1" height="1" fill="#008040" />
<rect x="298" y="44" width="1" height="1" fill="#008040" />
<rect x="300" y="30" width="1" height="1" fill="#008040" />
<rect x="300" y="32" width="1" height="1" fill="#008040" />
<rect x="300" y="34" width="1" height="1" fill="#008040" />
<rect x="300" y="36" width="1" height="1" fill="#008040" />
<rect x="300" y="38" width="1" height="1" fill="#008040" />
<rect x="300" y="40" width="1" height="1" fill="#008040" />
<rect x="300" y="42" width="1" height="1" fill="#008040" />
<rect x="300" y="44" width="1" height="1" fill="#008040" />
<rect x="302" y="30" width="1" height="1" fill="#008040" />
<rect x="304" y="30" width="1" height="1" fill="#008040" />
<rect x="306" y="30" width="1" height="1" fill="#008040" />
<rect x="308" y="30" width="1" height="1" fill="#008040" />
<rect x="299" y="29" width="1" height="1" fill="#ffff00" />
<rect x="299" y="31" width="1" height="1" fill="#ffff00" />
<rect x="299" y="33" width="1" height="1" fill="#ffff00" />
<rect x="299" y="35" width="1" height="1" fill="#ffff00" />
<rect x="299" y="37" width="1" height="1" fill="#ffff00" />
<rect x="299" y="39" width="1" height="1" fill="#ffff00" />
<rect x="299" y="41" width="1" height="1" fill="#ffff00" />
<rect x="299" y="43" width="1" height="1" fill="#ffff00" />
<rect x="300" y="29" width="1" height="1" fill="#000080" />
<rect x="302" y="29" width="1" height="1" fill="#000080" />
<rect x="301" y="30" width="1" height="1" fill="#000080" />
<rect x="300" y="31" width="1" height="1" fill="#000080" />
<rect x="302" y="31" width="1" height="1" fill="#000080" />
<rect x="301" y="32" width="1" height="1" fill="#000080" />
<rect x="300" y="33" width="1" height="1" fill="#000080" />
<rect x="302" y="33" width="1" height="1" fill="#000080" />
<rect x="301" y="34" width="1" height="1" fill="#000080" />
<rect x="300" y="35" width="1" height="1" fill="#000080" />
<rect x="302" y="35" width="1" height="1" fill="#000080" />
<rect x="301" y="36" width="1" height="1" fill="#000080" />
<rect x="300" y="37" width="1" height="1" fill="#000080" />
<rect x="302" y="37" width="1" height="1" fill="#000080" />
<rect x="301" y="38" width="1" height="1" fill="#000080" />
<rect x="300" y="39" width="1" height="1" fill="#000080" />
<rect x="302" y="39" width="1" height="1" fill="#000080" />
<rect x="301" y="40" width="1" height="1" fill="#000080" />
<rect x="300" y="41" width="1" height="1" fill="#000080" />
<rect x="302" y="41" width="1" height="1" fill="#000080" />
<rect x="301" y="42" width="1" height="1" fill="#000080" />
<rect x="300" y="43" width="1" height="1" fill="#000080" />
<rect x="302" y="43" width="1" height="1" fill="#000080" />
<rect x="301" y="44" width="1" height="1" fill="#000080" />
<rect x="316" y="44" width="1" height="1" fill="#008040" />
<rect x="318" y="44" width="1" height="1" fill="#008040" />
<rect x="320" y="44" width="1" height="1" fill="#008040" />
<rect x="322" y="30" width="1" height="1" fill="#008040" />
<rect x="322" y="32" width="1" height="1" fill="#008040" />
<rect x="322" y="34" width="1" height="1" fill="#008040" />
<rect x="322" y="36" width="1" height="1" fill="#008040" />
<rect x="322" y="38" width="1" height="1" fill="#008040" />
<rect x="322" y="40" width="1" height="1" fill="#008040" />
<rect x="322" y="42" width="1" height="1" fill="#008040" />
<rect x="322" y="44" width="1" height="1" fill="#008040" />
<rect x="324" y="30" width="1" height="1" fill="#008040" />
<rect x="326" y="30" width="1" height="1" fill="#008040" />
<rect x="328" y="30" width="1" height="1" fill="#008040" />
<rect x="330" y="30" width="1" height="1" fill="#008040" />
<rect x="338" y="44" width="1" height="1" fill="#008040" />
<rect x="340" y="44" width="1" height="1" fill="#008040" />
<rect x="342" y="44" width="1" height="1" fill="#008040" />
<rect x="344" y="30" width="1" height="1" fill="#008040" />
<rect x="344" y="32" width="1" height="1" fill="#008040" />
<rect x="344" y="34" width="1" height="1" fill="#008040" />
<rect x="344" y="36" width="1" height="1" fill="#008040" />
<rect x="344" y="38" width="1" height="1" fill="#008040" />
<rect x="344" y="40" width="1" height="1" fill="#008040" />
<rect x="344" y="42" width="1" height="1" fill="#008040" />
<rect x="344" y="44" width="1" height="1" fill="#008040" />
<rect x="346" y="30" width="1" height="1" fill="#008040" />
<rect x="348" y="30" width="1" height="1" fill="#008040" />
<rect x="350" y="30" width="1" height="1" fill="#008040" />
<rect x="352" y="30" width="1" height="1" fill="#008040" />
<rect x="343" y="29" width="1" height="1" fill="#ffff00" />
<rect x="343" y="31" width="1" height="1" fill="#ffff00" />
<rect x="343" y="33" width="1" height="1" fill="#ffff00" />
<rect x="343" y="35" width="1" height="1" fill="#ffff00" />
<rect x="343" y="37" width="1" height="1" fill="#ffff00" />
<rect x="343" y="39" width="1" height="1" fill="#ffff00" />
<rect x="343" y="41" width="1" height="1" fill="#ffff00" />
<rect x="343" y="43" width="1" height="1" fill="#ffff00" />
<g shape-rendering="auto">
<path d="M14 63.8 L19.8 58 L23.3 61.5 L20.5 64 L19.6 61.6 L17 65.5 Z" fill="#e040f0" stroke="#800090" stroke-width="0.8" stroke-linejoin="round"/>
<rect x="23.3" y="63.3" width="6.3" height="7.3" fill="#20b040" stroke="#107020" stroke-width="0.7"/>
<circle cx="23.8" cy="64.3" r="3" fill="#00f0ff" stroke="#70a0c0" stroke-width="0.5"/>
<path d="M19 64 L24 69 L19 74 L14 69 Z" fill="#0050f0"/>
<path d="M34 66 H39 L36.5 69 Z" fill="#000"/>
</g>
<g shape-rendering="auto">
<path d="M40.5 81.0 L48.0 88.5 L40.5 96.0 L33.0 88.5 Z" fill="#1a8ed8"/>
<path d="M33.0 88.5 L40.5 81.0 L40.5 85.5 L37.5 88.5 Z" fill="#a8e4f8"/>
<path d="M40.5 96.0 L48.0 88.5 L43.5 88.5 L40.5 91.5 Z" fill="#0a6aa8"/>
<path d="M40.5 85.5 L43.5 88.5 L40.5 91.5 L37.5 88.5 Z" fill="#10c0f0"/>
<path d="M40.5 98.0 L48.0 105.5 L40.5 113.0 L33.0 105.5 Z" fill="#1a8ed8"/>
<path d="M33.0 105.5 L40.5 98.0 L40.5 102.5 L37.5 105.5 Z" fill="#a8e4f8"/>
<path d="M40.5 113.0 L48.0 105.5 L43.5 105.5 L40.5 108.5 Z" fill="#0a6aa8"/>
<path d="M40.5 102.5 L43.5 105.5 L40.5 108.5 L37.5 105.5 Z" fill="#10c0f0"/>
<path d="M40.5 115.0 L48.0 122.5 L40.5 130.0 L33.0 122.5 Z" fill="#1a8ed8"/>
<path d="M33.0 122.5 L40.5 115.0 L40.5 119.5 L37.5 122.5 Z" fill="#a8e4f8"/>
<path d="M40.5 130.0 L48.0 122.5 L43.5 122.5 L40.5 125.5 Z" fill="#0a6aa8"/>
<path d="M40.5 119.5 L43.5 122.5 L40.5 125.5 L37.5 122.5 Z" fill="#10c0f0"/>
<path d="M40.5 132.0 L48.0 139.5 L40.5 147.0 L33.0 139.5 Z" fill="#1a8ed8"/>
<path d="M33.0 139.5 L40.5 132.0 L40.5 136.5 L37.5 139.5 Z" fill="#a8e4f8"/>
<path d="M40.5 147.0 L48.0 139.5 L43.5 139.5 L40.5 142.5 Z" fill="#0a6aa8"/>
<path d="M40.5 136.5 L43.5 139.5 L40.5 142.5 L37.5 139.5 Z" fill="#10c0f0"/>
</g>
<rect x="18" y="101.0" width="11" height="11" fill="#f0f2fa"/>
<rect x="18" y="111" width="11" height="1" fill="#8890b0" />
<rect x="28" y="101" width="1" height="11" fill="#b8c0d8" />
<rect x="21" y="106" width="5" height="1" fill="#000" />
<rect x="23" y="104" width="1" height="5" fill="#000" />
<rect x="29" y="106" width="4" height="1" fill="#d8d8d8" />
<rect x="18" y="118.0" width="11" height="11" fill="#f0f2fa"/>
<rect x="18" y="128" width="11" height="1" fill="#8890b0" />
<rect x="28" y="118" width="1" height="11" fill="#b8c0d8" />
<rect x="21" y="123" width="5" height="1" fill="#000" />
<rect x="23" y="121" width="1" height="5" fill="#000" />
<rect x="29" y="123" width="4" height="1" fill="#d8d8d8" />
<rect x="18" y="135.0" width="11" height="11" fill="#f0f2fa"/>
<rect x="18" y="145" width="11" height="1" fill="#8890b0" />
<rect x="28" y="135" width="1" height="11" fill="#b8c0d8" />
<rect x="21" y="140" width="5" height="1" fill="#000" />
<rect x="23" y="138" width="1" height="5" fill="#000" />
<rect x="29" y="140" width="4" height="1" fill="#d8d8d8" />
<path d="M15.5 145.5 L18.5 148.5 L15.5 151.5 Z" fill="none" stroke="#000" stroke-width="1"/>
<g shape-rendering="auto">
<path d="M14.5 780 L17 773.8 H18.3 L20.8 780 H19.2 L18.6 778.3 H16.7 L16.1 780 Z" fill="#d8d8d8"/>
<path d="M20 773.8 H21.5 L23 778 L24.4 773.8 H25 L23.6 780 H22.4 Z" fill="#484848"/>
<path d="M15 781.5 H23.5" stroke="#3a88f0" stroke-width="1.2"/><path d="M14 781.5 L16.2 779.8 V783.2 Z M24.5 781.5 L22.3 779.8 V783.2 Z" fill="#3a88f0"/>
<rect x="25.5" y="774.5" width="10.5" height="9" fill="#eef1f6" stroke="#7aa4e4" stroke-width="0.9"/>
<rect x="25.5" y="774.5" width="10.5" height="1.6" fill="#78a4e8"/>
<path d="M27 777.5 H29 M27 780 H29 M30 777.5 H35" stroke="#90a8d0" stroke-width="1"/>
<ellipse cx="30.5" cy="782.5" rx="2.8" ry="2" fill="#80a8e8" transform="rotate(-40 30.5 782.5)"/>
<circle cx="43" cy="779" r="5" fill="#48b048" stroke="#389838" stroke-width="0.8"/>
<path d="M43 776.5 V781.5 M40.5 779 H45.5" stroke="#fff" stroke-width="1.8"/>
<defs><linearGradient id="lockg" x1="0" y1="0" x2="0" y2="1"><stop offset="0" stop-color="#fde08a"/><stop offset="1" stop-color="#f0b030"/></linearGradient><radialGradient id="redg" cx="0.4" cy="0.35" r="0.7"><stop offset="0" stop-color="#f88080"/><stop offset="1" stop-color="#d83838"/></radialGradient></defs>
<path d="M18.8 797.5 V795.5 Q19.5 793 21.8 793 Q24 793 24.5 795.5" fill="none" stroke="#c4c4c4" stroke-width="1.4"/>
<rect x="17" y="797" width="10.5" height="8" fill="url(#lockg)"/>
<rect x="17" y="804" width="10.5" height="1" fill="#e09020"/>
<path d="M19.5 799 V803 M25 799 V803" stroke="#d8a030" stroke-width="0.8"/>
<rect x="21.5" y="800" width="1.5" height="1.5" fill="#806010"/>
<path d="M31 802.5 L35 798.5" stroke="#5a8ae0" stroke-width="4.2" stroke-linecap="round"/>
<path d="M31.2 802.3 L34.8 798.7" stroke="#a4c0f0" stroke-width="1.6" stroke-linecap="round"/>
<path d="M35.5 797.5 L36.8 796 V793.5 M36.8 796 Q38.5 796.8 40 795" stroke="#d4d4d4" stroke-width="1.5" fill="none"/>
<circle cx="47" cy="798" r="5.1" fill="url(#redg)"/>
<rect x="44.5" y="797" width="5" height="2" fill="#ffffff"/>
<path d="M18.8 814.5 V812.5 Q19.5 810 21.8 810 Q24 810 24.5 812.5" fill="none" stroke="#c4c4c4" stroke-width="1.4"/>
<rect x="17" y="814" width="10.5" height="8" fill="url(#lockg)"/>
<rect x="17" y="821" width="10.5" height="1" fill="#e09020"/>
<path d="M19.5 816 V820 M25 816 V820" stroke="#d8a030" stroke-width="0.8"/>
<rect x="21.5" y="817" width="1.5" height="1.5" fill="#806010"/>
<path d="M31 819.5 L35 815.5" stroke="#5a8ae0" stroke-width="4.2" stroke-linecap="round"/>
<path d="M31.2 819.3 L34.8 815.7" stroke="#a4c0f0" stroke-width="1.6" stroke-linecap="round"/>
<path d="M35.5 814.5 L36.8 813 V810.5 M36.8 813 Q38.5 813.8 40 812" stroke="#d4d4d4" stroke-width="1.5" fill="none"/>
<circle cx="47" cy="815" r="5.1" fill="url(#redg)"/>
<rect x="44.5" y="814" width="5" height="2" fill="#ffffff"/>
</g>
<defs><pattern id="chk" width="2" height="2" patternUnits="userSpaceOnUse"><rect width="2" height="2" fill="#ffffff"/><rect width="1" height="1" fill="#ececec"/><rect x="1" y="1" width="1" height="1" fill="#ececec"/></pattern></defs>
<rect x="30" y="828" width="215" height="17" fill="url(#chk)" />
<rect x="291" y="828" width="58" height="17" fill="url(#chk)" />
<rect x="13" y="828" width="17" height="17" fill="#f0f0f0" />
<rect x="13" y="828" width="17" height="1" fill="#f0f0f0" />
<rect x="13" y="828" width="1" height="17" fill="#f0f0f0" />
<rect x="14" y="829" width="15" height="1" fill="#ffffff" />
<rect x="14" y="829" width="1" height="15" fill="#ffffff" />
<rect x="13" y="844" width="17" height="1" fill="#696969" />
<rect x="29" y="828" width="1" height="17" fill="#696969" />
<rect x="14" y="843" width="15" height="1" fill="#a0a0a0" />
<rect x="28" y="829" width="1" height="15" fill="#a0a0a0" />
<path d="M18 836.5 L22 832.5 V840.5 Z" fill="#a0a0a0"/>
<rect x="245" y="828" width="17" height="17" fill="#f0f0f0" />
<rect x="245" y="828" width="17" height="1" fill="#f0f0f0" />
<rect x="245" y="828" width="1" height="17" fill="#f0f0f0" />
<rect x="246" y="829" width="15" height="1" fill="#ffffff" />
<rect x="246" y="829" width="1" height="15" fill="#ffffff" />
<rect x="245" y="844" width="17" height="1" fill="#696969" />
<rect x="261" y="828" width="1" height="17" fill="#696969" />
<rect x="246" y="843" width="15" height="1" fill="#a0a0a0" />
<rect x="260" y="829" width="1" height="15" fill="#a0a0a0" />
<path d="M256 836.5 L252 832.5 V840.5 Z" fill="#a0a0a0"/>
<rect x="265" y="828" width="17" height="17" fill="#f0f0f0" />
<rect x="265" y="828" width="17" height="1" fill="#f0f0f0" />
<rect x="265" y="828" width="1" height="17" fill="#f0f0f0" />
<rect x="266" y="829" width="15" height="1" fill="#ffffff" />
<rect x="266" y="829" width="1" height="15" fill="#ffffff" />
<rect x="265" y="844" width="17" height="1" fill="#696969" />
<rect x="281" y="828" width="1" height="17" fill="#696969" />
<rect x="266" y="843" width="15" height="1" fill="#a0a0a0" />
<rect x="280" y="829" width="1" height="15" fill="#a0a0a0" />
<path d="M270 836.5 L274 832.5 V840.5 Z" fill="#000"/>
<rect x="282" y="828" width="9" height="17" fill="#f0f0f0" />
<rect x="282" y="828" width="9" height="1" fill="#f0f0f0" />
<rect x="282" y="828" width="1" height="17" fill="#f0f0f0" />
<rect x="283" y="829" width="7" height="1" fill="#ffffff" />
<rect x="283" y="829" width="1" height="15" fill="#ffffff" />
<rect x="282" y="844" width="9" height="1" fill="#696969" />
<rect x="290" y="828" width="1" height="17" fill="#696969" />
<rect x="283" y="843" width="7" height="1" fill="#a0a0a0" />
<rect x="289" y="829" width="1" height="15" fill="#a0a0a0" />
<rect x="349" y="828" width="16" height="17" fill="#f0f0f0" />
<rect x="349" y="828" width="16" height="1" fill="#f0f0f0" />
<rect x="349" y="828" width="1" height="17" fill="#f0f0f0" />
<rect x="350" y="829" width="14" height="1" fill="#ffffff" />
<rect x="350" y="829" width="1" height="15" fill="#ffffff" />
<rect x="349" y="844" width="16" height="1" fill="#696969" />
<rect x="364" y="828" width="1" height="17" fill="#696969" />
<rect x="350" y="843" width="14" height="1" fill="#a0a0a0" />
<rect x="363" y="829" width="1" height="15" fill="#a0a0a0" />
<path d="M358.5 836.5 L354.5 832.5 V840.5 Z" fill="#000"/>
<rect x="369" y="829" width="15" height="15" fill="#f0f0f0" />
<rect x="369" y="829" width="15" height="1" fill="#f0f0f0" />
<rect x="369" y="829" width="1" height="15" fill="#f0f0f0" />
<rect x="370" y="830" width="13" height="1" fill="#ffffff" />
<rect x="370" y="830" width="1" height="13" fill="#ffffff" />
<rect x="369" y="843" width="15" height="1" fill="#696969" />
<rect x="383" y="829" width="1" height="15" fill="#696969" />
<rect x="370" y="842" width="13" height="1" fill="#a0a0a0" />
<rect x="382" y="830" width="1" height="13" fill="#a0a0a0" />
<path d="M375 836.5 L379 832.5 V840.5 Z" fill="#000"/>
<rect x="384" y="829" width="11" height="15" fill="#f0f0f0" />
<rect x="384" y="829" width="11" height="1" fill="#f0f0f0" />
<rect x="384" y="829" width="1" height="15" fill="#f0f0f0" />
<rect x="385" y="830" width="9" height="1" fill="#ffffff" />
<rect x="385" y="830" width="1" height="13" fill="#ffffff" />
<rect x="384" y="843" width="11" height="1" fill="#696969" />
<rect x="394" y="829" width="1" height="15" fill="#696969" />
<rect x="385" y="842" width="9" height="1" fill="#a0a0a0" />
<rect x="393" y="830" width="1" height="13" fill="#a0a0a0" />
</svg>
</body></html>
